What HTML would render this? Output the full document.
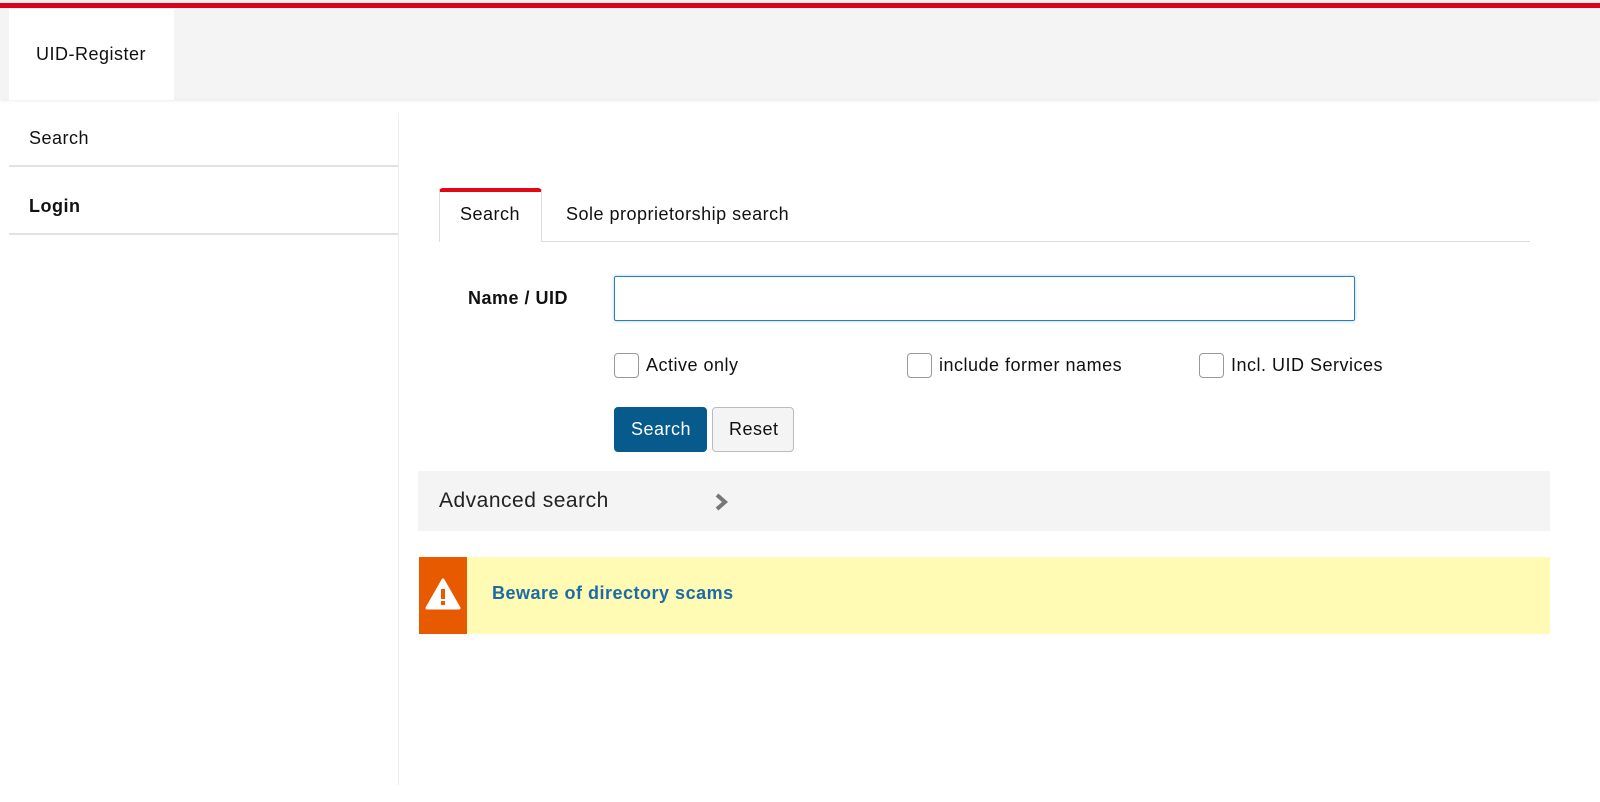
<!DOCTYPE html>
<html><head><style>
*{box-sizing:border-box;margin:0;padding:0}
body{width:1600px;height:802px;background:#fff;font-family:"Liberation Sans",sans-serif;color:#111;position:relative;overflow:hidden}
.a{position:absolute}
.cb{position:absolute;width:25px;height:25px;border:1px solid #999;border-radius:4px;background:#fff}
.t{position:absolute;font-size:18px;white-space:nowrap;letter-spacing:.5px}
</style></head><body>
<div class="a" style="left:0;top:0;width:1600px;height:3px;background:#eee"></div>
<div class="a" style="left:0;top:3px;width:1600px;height:5px;background:#dc0018"></div>
<div class="a" style="left:0;top:8px;width:1600px;height:91px;background:#f4f4f4;box-shadow:0 2px 3px rgba(0,0,0,.08)"></div>
<div class="a" style="left:9px;top:9px;width:165px;height:91px;background:#fff"></div>
<div class="t" style="left:36px;top:44px;font-size:18px">UID-Register</div>
<div class="t" style="left:29px;top:128px">Search</div>
<div class="a" style="left:9px;top:165px;width:389px;height:2px;background:#e2e2e2"></div>
<div class="t" style="left:29px;top:196px;font-weight:bold">Login</div>
<div class="a" style="left:9px;top:233px;width:389px;height:2px;background:#e2e2e2"></div>
<div class="a" style="left:398px;top:113px;width:1px;height:672px;background:#eee"></div>

<div class="a" style="left:440px;top:241px;width:1090px;height:1px;background:#ddd"></div>
<div class="a" style="left:439px;top:188px;width:103px;height:54px;background:#fff;border:1px solid #ddd;border-bottom:none;border-top:4px solid #e30613;border-radius:4px 4px 0 0"></div>
<div class="t" style="left:460px;top:204px">Search</div>
<div class="t" style="left:566px;top:204px">Sole proprietorship search</div>

<div class="t" style="left:468px;top:288px;font-weight:bold">Name / UID</div>
<div class="a" style="left:614px;top:276px;width:741px;height:45px;border:1px solid #2b7cc0;border-radius:2px;box-shadow:0 0 3px rgba(43,124,192,.4)"></div>

<div class="cb" style="left:614px;top:353px"></div><div class="t" style="left:646px;top:355px">Active only</div>
<div class="cb" style="left:907px;top:353px"></div><div class="t" style="left:939px;top:355px">include former names</div>
<div class="cb" style="left:1199px;top:353px"></div><div class="t" style="left:1231px;top:355px">Incl. UID Services</div>

<div class="a" style="left:614px;top:407px;width:93px;height:45px;background:#065a8c;border-radius:4px"></div>
<div class="t" style="left:631px;top:419px;color:#fff">Search</div>
<div class="a" style="left:712px;top:407px;width:82px;height:45px;background:#f4f4f4;border:1px solid #bbb;border-radius:4px"></div>
<div class="t" style="left:729px;top:419px">Reset</div>

<div class="a" style="left:418px;top:471px;width:1132px;height:60px;background:#f4f4f4"></div>
<div class="t" style="left:439px;top:489px;font-size:21px;color:#222">Advanced search</div>
<svg class="a" style="left:714px;top:492px" width="16" height="20" viewBox="0 0 16 20"><path d="M3 3l8 7-8 7" fill="none" stroke="#777" stroke-width="4"/></svg>

<div class="a" style="left:419px;top:557px;width:1131px;height:77px;background:#fffab4"></div>
<div class="a" style="left:419px;top:557px;width:48px;height:77px;background:#e85a00"></div>
<svg class="a" style="left:424px;top:577px" width="38" height="34" viewBox="0 0 38 34"><path d="M19 3L35 31H3Z" fill="#fff" stroke="#fff" stroke-width="3" stroke-linejoin="round"/><rect x="17" y="12" width="4" height="10" fill="#e85a00"/><rect x="17" y="24" width="4" height="4" fill="#e85a00"/></svg>
<div class="t" style="left:492px;top:583px;font-weight:bold;color:#1a6ca7">Beware of directory scams</div>
</body></html>
